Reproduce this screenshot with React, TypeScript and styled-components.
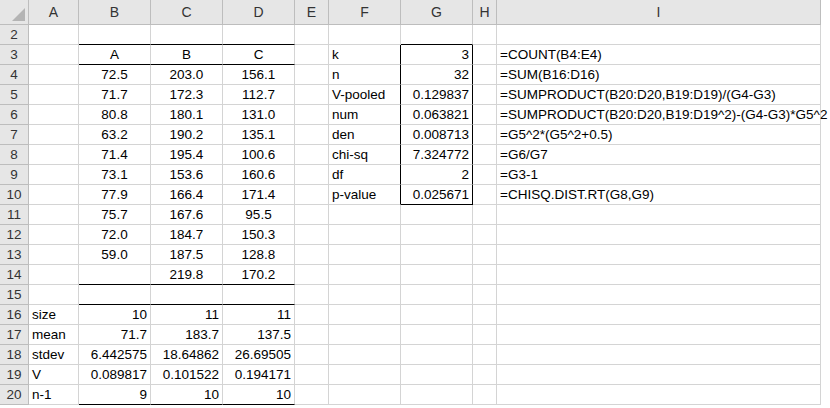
import React from "react";
import styled, { createGlobalStyle } from "styled-components";

const Global = createGlobalStyle`
  body { margin: 0; background: #fff; font-family: "Liberation Sans", Arial, sans-serif; }
`;

const COLS = [29, 50, 72, 72, 72, 34, 72, 72, 24, 324];
const Grid = styled.div`
  display: grid;
  grid-template-columns: ${COLS.map((c) => c + "px").join(" ")};
  grid-template-rows: 25px repeat(19, 20px);
  width: 830px;
`;

const Head = styled.div`
  background: #e6e6e6;
  color: #333;
  font-size: 14px;
  display: flex;
  align-items: center;
  justify-content: center;
  box-sizing: border-box;
  border-right: 1px solid #bdbdbd;
  border-bottom: 1px solid #bdbdbd;
`;

const Corner = styled(Head)`
  position: relative;
  &::after {
    content: "";
    position: absolute;
    right: 3px;
    bottom: 3px;
    border-left: 13px solid transparent;
    border-bottom: 13px solid #b4b4b4;
  }
`;

const RowHead = styled(Head)`
  font-size: 13.5px;
`;

const Cell = styled.div<{ $align: string; $bb: boolean; $br: boolean }>`
  box-sizing: border-box;
  font-size: 13.5px;
  color: #000;
  white-space: nowrap;
  overflow: visible;
  display: flex;
  align-items: center;
  justify-content: ${(p) => (p.$align === "r" ? "flex-end" : p.$align === "c" ? "center" : "flex-start")};
  padding: 0 3px;
  border-right: 1px solid ${(p) => (p.$br ? "#000" : "#d4d4d4")};
  border-bottom: 1px solid ${(p) => (p.$bb ? "#000" : "#d4d4d4")};
  position: relative;
  z-index: ${(p) => (p.$align === "l" ? 1 : 0)};
`;

const data: Record<number, string[]> = {
  3: ["", "A", "B", "C", "", "k", "3", "", "=COUNT(B4:E4)"],
  4: ["", "72.5", "203.0", "156.1", "", "n", "32", "", "=SUM(B16:D16)"],
  5: ["", "71.7", "172.3", "112.7", "", "V-pooled", "0.129837", "", "=SUMPRODUCT(B20:D20,B19:D19)/(G4-G3)"],
  6: ["", "80.8", "180.1", "131.0", "", "num", "0.063821", "", "=SUMPRODUCT(B20:D20,B19:D19^2)-(G4-G3)*G5^2"],
  7: ["", "63.2", "190.2", "135.1", "", "den", "0.008713", "", "=G5^2*(G5^2+0.5)"],
  8: ["", "71.4", "195.4", "100.6", "", "chi-sq", "7.324772", "", "=G6/G7"],
  9: ["", "73.1", "153.6", "160.6", "", "df", "2", "", "=G3-1"],
  10: ["", "77.9", "166.4", "171.4", "", "p-value", "0.025671", "", "=CHISQ.DIST.RT(G8,G9)"],
  11: ["", "75.7", "167.6", "95.5"],
  12: ["", "72.0", "184.7", "150.3"],
  13: ["", "59.0", "187.5", "128.8"],
  14: ["", "", "219.8", "170.2"],
  16: ["size", "10", "11", "11"],
  17: ["mean", "71.7", "183.7", "137.5"],
  18: ["stdev", "6.442575", "18.64862", "26.69505"],
  19: ["V", "0.089817", "0.101522", "0.194171"],
  20: ["n-1", "9", "10", "10"],
};

const letters = ["A", "B", "C", "D", "E", "F", "G", "H", "I"];

function alignFor(r: number, c: number, v: string): string {
  if (r >= 3 && r <= 14 && c >= 1 && c <= 3) return "c";
  if (c === 0 || c === 5 || c === 8) return "l";
  if (v !== "" && !isNaN(Number(v))) return "r";
  return "l";
}

export default function App() {
  const cells: React.ReactNode[] = [];
  cells.push(<Corner key="corner" />);
  letters.forEach((l) => cells.push(<Head key={"h" + l}>{l}</Head>));
  for (let r = 2; r <= 20; r++) {
    cells.push(<RowHead key={"r" + r}>{r}</RowHead>);
    for (let c = 0; c < 9; c++) {
      const v = data[r]?.[c] ?? "";
      const inBD = c >= 1 && c <= 3;
      const bb =
        (inBD && (r === 2 || r === 3 || r === 14 || r === 15 || r === 20)) ||
        (c === 6 && (r === 2 || r === 10));
      const br = (c === 5 || c === 6) && r >= 3 && r <= 10;
      cells.push(
        <Cell key={r + "-" + c} $align={alignFor(r, c, v)} $bb={bb} $br={br}>
          {v}
        </Cell>
      );
    }
  }
  return (
    <>
      <Global />
      <Grid>{cells}</Grid>
    </>
  );
}
